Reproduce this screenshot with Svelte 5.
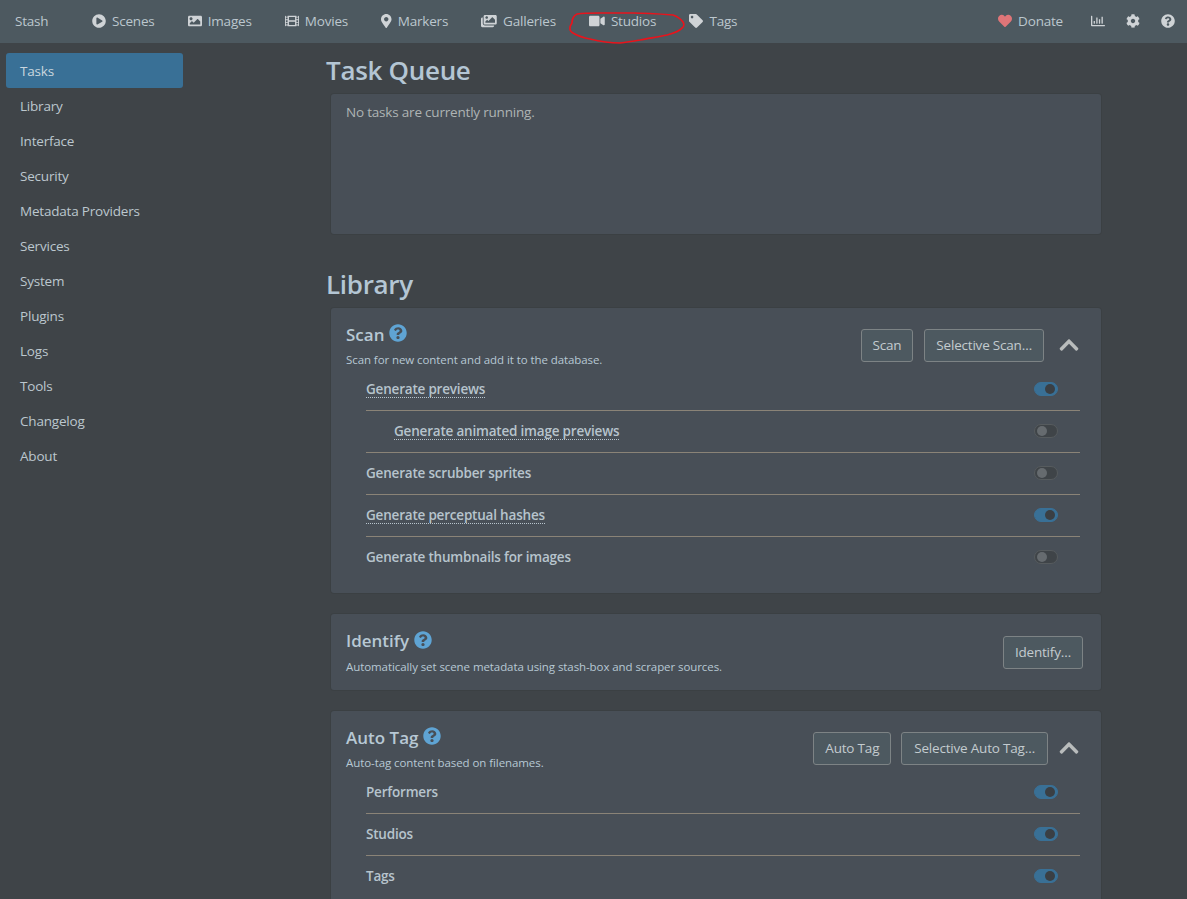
<script>
  const icons = {
    play: [512, "M256 8C119 8 8 119 8 256s111 248 248 248 248-111 248-248S393 8 256 8zm115.7 272l-176 101c-15.8 8.8-35.7-2.5-35.7-21V152c0-18.4 19.8-29.8 35.7-21l176 107c16.4 9.2 16.4 32.9 0 42z"],
    image: [512, "M464 448H48c-26.51 0-48-21.49-48-48V112c0-26.51 21.49-48 48-48h416c26.51 0 48 21.49 48 48v288c0 26.51-21.49 48-48 48zM112 120c-30.928 0-56 25.072-56 56s25.072 56 56 56 56-25.072 56-56-25.072-56-56-56zM64 384h384V272l-87.515-87.515c-4.686-4.686-12.284-4.686-16.971 0L208 320l-55.515-55.515c-4.686-4.686-12.284-4.686-16.971 0L64 336v48z"],
    film: [512, "M488 64h-8v20c0 6.6-5.4 12-12 12h-40c-6.6 0-12-5.4-12-12V64H96v20c0 6.6-5.4 12-12 12H44c-6.6 0-12-5.4-12-12V64h-8C10.7 64 0 74.7 0 88v336c0 13.3 10.7 24 24 24h8v-20c0-6.6 5.4-12 12-12h40c6.6 0 12 5.4 12 12v20h320v-20c0-6.6 5.4-12 12-12h40c6.6 0 12 5.4 12 12v20h8c13.3 0 24-10.7 24-24V88c0-13.3-10.7-24-24-24zM96 372c0 6.6-5.4 12-12 12H44c-6.6 0-12-5.4-12-12v-40c0-6.6 5.4-12 12-12h40c6.6 0 12 5.4 12 12v40zm0-96c0 6.6-5.4 12-12 12H44c-6.6 0-12-5.4-12-12v-40c0-6.6 5.4-12 12-12h40c6.6 0 12 5.4 12 12v40zm0-96c0 6.6-5.4 12-12 12H44c-6.6 0-12-5.4-12-12v-40c0-6.6 5.4-12 12-12h40c6.6 0 12 5.4 12 12v40zm272 208c0 6.6-5.4 12-12 12H156c-6.6 0-12-5.4-12-12v-96c0-6.6 5.4-12 12-12h200c6.6 0 12 5.4 12 12v96zm0-168c0 6.6-5.4 12-12 12H156c-6.6 0-12-5.4-12-12v-96c0-6.6 5.4-12 12-12h200c6.6 0 12 5.4 12 12v96zm112 152c0 6.6-5.4 12-12 12h-40c-6.6 0-12-5.4-12-12v-40c0-6.6 5.4-12 12-12h40c6.6 0 12 5.4 12 12v40zm0-96c0 6.6-5.4 12-12 12h-40c-6.6 0-12-5.4-12-12v-40c0-6.6 5.4-12 12-12h40c6.6 0 12 5.4 12 12v40zm0-96c0 6.6-5.4 12-12 12h-40c-6.6 0-12-5.4-12-12v-40c0-6.6 5.4-12 12-12h40c6.6 0 12 5.4 12 12v40z"],
    marker: [384, "M172.268 501.67C26.97 291.031 0 256.406 0 192 0 85.961 85.961 0 192 0s192 85.961 192 192c0 64.406-26.97 99.031-172.268 309.67-9.535 13.774-29.93 13.773-39.464 0zM192 272c44.183 0 80-35.817 80-80s-35.817-80-80-80-80 35.817-80 80 35.817 80 80 80z"],
    images: [576, "M480 416v16c0 26.51-21.49 48-48 48H48c-26.51 0-48-21.49-48-48V176c0-26.51 21.49-48 48-48h16v208c0 44.112 35.888 80 80 80h336zm96-80V80c0-26.51-21.49-48-48-48H144c-26.51 0-48 21.49-48 48v256c0 26.51 21.49 48 48 48h384c26.51 0 48-21.49 48-48zM256 128c0 26.51-21.49 48-48 48s-48-21.49-48-48 21.49-48 48-48 48 21.49 48 48zm-96 144l55.515-55.515c4.686-4.686 12.284-4.686 16.971 0L272 256l135.515-135.515c4.686-4.686 12.284-4.686 16.971 0L512 208v112H160v-48z"],
    video: [576, "M336.2 64H47.8C21.4 64 0 85.4 0 111.8v288.4C0 426.6 21.4 448 47.8 448h288.4c26.4 0 47.8-21.4 47.8-47.8V111.8c0-26.4-21.4-47.8-47.8-47.8zm189.4 37.7L416 177.3v157.4l109.6 75.5c21.2 14.6 50.4-.3 50.4-25.8V127.5c0-25.4-29.1-40.4-50.4-25.8z"],
    tag: [512, "M0 252.118V48C0 21.49 21.49 0 48 0h204.118a48 48 0 0 1 33.941 14.059l211.882 211.882c18.745 18.745 18.745 49.137 0 67.882L293.823 497.941c-18.745 18.745-49.137 18.745-67.882 0L14.059 286.059A48 48 0 0 1 0 252.118zM112 64c-26.51 0-48 21.49-48 48s21.49 48 48 48 48-21.49 48-48-21.49-48-48-48z"],
    heart: [512, "M462.3 62.6C407.5 15.9 326 24.3 275.7 76.2L256 96.5l-19.7-20.3C186.1 24.3 104.5 15.9 49.7 62.6c-62.8 53.6-66.1 149.8-9.9 207.9l193.5 199.8c12.5 12.9 32.8 12.9 45.3 0l193.5-199.8c56.3-58.1 53-154.3-9.8-207.9z"],
    chart: [512, "M396.8 352h22.4c6.4 0 12.8-6.4 12.8-12.8V108.8c0-6.4-6.4-12.8-12.8-12.8h-22.4c-6.4 0-12.8 6.4-12.8 12.8v230.4c0 6.4 6.4 12.8 12.8 12.8zm-192 0h22.4c6.4 0 12.8-6.4 12.8-12.8V140.8c0-6.4-6.4-12.8-12.8-12.8h-22.4c-6.4 0-12.8 6.4-12.8 12.8v198.4c0 6.4 6.4 12.8 12.8 12.8zm96 0h22.4c6.4 0 12.8-6.4 12.8-12.8V204.8c0-6.4-6.4-12.8-12.8-12.8h-22.4c-6.4 0-12.8 6.4-12.8 12.8v134.4c0 6.4 6.4 12.8 12.8 12.8zM496 400H48V80c0-8.84-7.16-16-16-16H16C7.16 64 0 71.16 0 80v336c0 17.67 14.33 32 32 32h464c8.84 0 16-7.16 16-16v-16c0-8.84-7.16-16-16-16zm-387.2-48h22.4c6.4 0 12.8-6.4 12.8-12.8v-70.4c0-6.4-6.4-12.8-12.8-12.8h-22.4c-6.4 0-12.8 6.4-12.8 12.8v70.4c0 6.4 6.4 12.8 12.8 12.8z"],
    cog: [512, "M487.4 315.7l-42.6-24.6c4.3-23.2 4.3-47 0-70.2l42.6-24.6c4.9-2.8 7.1-8.6 5.5-14-11.1-35.6-30-67.8-54.7-94.6-3.8-4.1-10-5.1-14.8-2.3L380.8 110c-17.9-15.4-38.5-27.3-60.8-35.1V25.8c0-5.6-3.9-10.5-9.4-11.7-36.7-8.2-74.3-7.8-109.2 0-5.5 1.2-9.4 6.1-9.4 11.7V75c-22.2 7.9-42.8 19.8-60.8 35.1L88.7 85.5c-4.9-2.8-11-1.9-14.8 2.3-24.7 26.7-43.6 58.9-54.7 94.6-1.7 5.4.6 11.2 5.5 14L67.3 221c-4.3 23.2-4.3 47 0 70.2l-42.6 24.6c-4.9 2.8-7.1 8.6-5.5 14 11.1 35.6 30 67.8 54.7 94.6 3.8 4.1 10 5.1 14.8 2.3l42.6-24.6c17.9 15.4 38.5 27.3 60.8 35.1v49.2c0 5.6 3.9 10.5 9.4 11.7 36.7 8.2 74.3 7.8 109.2 0 5.5-1.2 9.4-6.1 9.4-11.7v-49.2c22.2-7.9 42.8-19.8 60.8-35.1l42.6 24.6c4.9 2.8 11 1.9 14.8-2.3 24.7-26.7 43.6-58.9 54.7-94.6 1.5-5.5-.7-11.3-5.6-14.1zM256 336c-44.1 0-80-35.9-80-80s35.9-80 80-80 80 35.9 80 80-35.9 80-80 80z"],
    help: [512, "M504 256c0 136.997-111.043 248-248 248S8 392.997 8 256C8 119.083 119.043 8 256 8s248 111.083 248 248zM262.655 90c-54.497 0-89.255 22.957-116.549 63.758-3.536 5.286-2.353 12.415 2.715 16.258l34.699 26.31c5.205 3.947 12.621 3.008 16.665-2.122 17.864-22.658 30.113-35.797 57.303-35.797 20.429 0 45.698 13.148 45.698 32.958 0 14.976-12.363 22.667-32.534 33.976C247.128 238.528 216 254.941 216 296v4c0 6.627 5.373 12 12 12h56c6.627 0 12-5.373 12-12v-1.333c0-28.462 83.186-29.647 83.186-106.667 0-58.002-60.165-102-116.531-102zM256 338c-25.365 0-46 20.635-46 46 0 25.364 20.635 46 46 46s46-20.636 46-46c0-25.365-20.635-46-46-46z"],
    up: [448, "M240.971 130.524l194.343 194.343c9.373 9.373 9.373 24.569 0 33.941l-22.667 22.667c-9.357 9.357-24.522 9.375-33.901.04L224 227.495 69.255 381.516c-9.379 9.335-24.544 9.317-33.901-.04l-22.667-22.667c-9.373-9.373-9.373-24.569 0-33.941L207.03 130.525c9.372-9.373 24.568-9.373 33.941-.001z"]
  };
  const navItems = [
    ["play", "Scenes"], ["image", "Images"], ["film", "Movies"], ["marker", "Markers"],
    ["images", "Galleries"], ["video", "Studios"], ["tag", "Tags"]
  ];
  const sideItems = ["Tasks", "Library", "Interface", "Security", "Metadata Providers", "Services", "System", "Plugins", "Logs", "Tools", "Changelog", "About"];
  const scanRows = [
    { label: "Generate previews", on: true, hint: true },
    { label: "Generate animated image previews", on: false, hint: true, nested: true },
    { label: "Generate scrubber sprites", on: false },
    { label: "Generate perceptual hashes", on: true, hint: true },
    { label: "Generate thumbnails for images", on: false }
  ];
  const tagRows = [
    { label: "Performers", on: true }, { label: "Studios", on: true }, { label: "Tags", on: true }
  ];
</script>

{#snippet icon(name, cls = "")}
  <svg class="icon {cls}" viewBox="0 0 {icons[name][0]} 512" aria-hidden="true"><path fill="currentColor" d={icons[name][1]} /></svg>
{/snippet}

{#snippet settingRows(rows)}
  <div class="rows">
    {#each rows as row}
      <div class="row" class:nested={row.nested}>
        <span class="row-label" class:hint={row.hint}>{row.label}</span>
        <span class="toggle" class:on={row.on}><span class="knob"></span></span>
      </div>
    {/each}
  </div>
{/snippet}

<div class="page">
  <nav class="navbar">
    <a class="brand">Stash</a>
    <div class="nav-items">
      {#each navItems as [ic, label]}
        <a class="nav-link">{@render icon(ic)}<span>{label}</span></a>
      {/each}
    </div>
    <div class="nav-right">
      <a class="nav-link donate">{@render icon("heart", "heart")}<span>Donate</span></a>
      <a class="nav-icon">{@render icon("chart")}</a>
      <a class="nav-icon">{@render icon("cog")}</a>
      <a class="nav-icon">{@render icon("help")}</a>
    </div>
  </nav>

  <div class="layout">
    <aside class="sidebar">
      {#each sideItems as item, i}
        <a class="side-link" class:active={i === 0}>{item}</a>
      {/each}
    </aside>

    <main class="content">
      <h1 class="section-title">Task Queue</h1>
      <section class="card queue">No tasks are currently running.</section>

      <h1 class="section-title library">Library</h1>

      <section class="card setting-card">
        <div class="card-head">
          <div class="head-text">
            <h3>Scan {@render icon("help", "q")}</h3>
            <p>Scan for new content and add it to the database.</p>
          </div>
          <div class="actions">
            <button>Scan</button>
            <button>Selective Scan…</button>
            <span class="chev">{@render icon("up")}</span>
          </div>
        </div>
        {@render settingRows(scanRows)}
      </section>

      <section class="card setting-card identify">
        <div class="card-head">
          <div class="head-text">
            <h3>Identify {@render icon("help", "q")}</h3>
            <p>Automatically set scene metadata using stash-box and scraper sources.</p>
          </div>
          <div class="actions">
            <button>Identify…</button>
          </div>
        </div>
      </section>

      <section class="card setting-card">
        <div class="card-head">
          <div class="head-text">
            <h3>Auto Tag {@render icon("help", "q")}</h3>
            <p>Auto-tag content based on filenames.</p>
          </div>
          <div class="actions tag-actions">
            <button>Auto Tag</button>
            <button class="wide">Selective Auto Tag…</button>
            <span class="chev">{@render icon("up")}</span>
          </div>
        </div>
        {@render settingRows(tagRows)}
      </section>
    </main>
  </div>

  <svg class="scribble" viewBox="0 0 140 50" aria-hidden="true">
    <path d="M17 14C13 16 12 19 12 23C9 27 9 31 13 33C18 36 24 38 30 39C42 42 52 43 60 43C68 42 74 41 80 40C90 38 99 37 107 35C114 33 120 31 122 28C125 26 124 24 123 22C120 18 116 16 113 15C100 14 86 13 73 13C60 13 50 13 40 13C32 13 24 13 17 14" />
  </svg>
</div>

<style>
  :global(body) {
    margin: 0;
    overflow: hidden;
    background: #3f4448;
  }
  .page {
    position: relative;
    height: 899px;
    overflow: hidden;
    background: #3f4448;
    font-family: "Open Sans", "Noto Sans", sans-serif;
    font-size: 13.5px;
    letter-spacing: -0.2px;
    color: #c0c8ce;
  }
  .navbar {
    display: flex;
    align-items: center;
    height: 43px;
    box-sizing: border-box;
    padding-bottom: 2px;
    background: #4d5960;
    color: #bcc7ce;
  }
  .brand {
    padding-left: 15px;
    width: 60px;
    flex: none;
    box-sizing: content-box;
  }
  .nav-items {
    display: flex;
    padding-left: 17px;
  }
  .nav-link {
    display: flex;
    align-items: center;
    gap: 6px;
    margin-right: 33.2px;
    white-space: nowrap;
  }
  .nav-link .icon {
    color: #cfd3d6;
    height: 14px;
    width: auto;
  }
  .nav-right {
    margin-left: auto;
    display: flex;
    align-items: center;
    padding-right: 12px;
  }
  .nav-link.donate {
    margin-right: 7px;
  }
  .nav-link .heart {
    color: #df7578;
  }
  .nav-icon {
    display: flex;
    margin-left: 21px;
    color: #cfd3d6;
  }
  .nav-icon .icon {
    width: 14px;
    height: 14px;
  }
  .layout {
    display: flex;
    align-items: flex-start;
  }
  .sidebar {
    flex: none;
    width: 177px;
    margin: 10px 148px 0 6px;
    display: flex;
    flex-direction: column;
  }
  .side-link {
    height: 35px;
    line-height: 37px;
    padding-left: 14px;
    border-radius: 3px;
    color: #bcc7ce;
  }
  .active {
    background: #397096;
    color: #c9d6de;
  }
  .content {
    width: 770px;
    flex: none;
  }
  .section-title {
    margin: 8px 0 3px -5px;
    height: 40px;
    line-height: 38px;
    font-size: 26px;
    font-weight: 600;
    letter-spacing: -0.3px;
    color: #b4c6d4;
  }
  .section-title.library {
    margin-top: 31px;
  }
  .card {
    background: #484f57;
    border-radius: 3px;
    box-shadow: 0 0 0 1px rgba(0, 0, 0, 0.06);
    box-sizing: border-box;
  }
  .queue {
    height: 140px;
    padding: 9px 15px;
    color: #aeb4b4;
    line-height: 18px;
  }
  .setting-card {
    padding: 15px 21px 14px 15px;
    margin-bottom: 21px;
  }
  .setting-card.identify {
    height: 76px;
    padding-right: 18px;
  }
  .card-head {
    display: flex;
    justify-content: space-between;
    align-items: center;
    height: 46px;
    box-sizing: border-box;
    padding-bottom: 2px;
  }
  .identify .card-head {
    padding-bottom: 0;
  }
  h3 {
    margin: 0 0 4px;
    display: flex;
    align-items: center;
    gap: 5px;
    font-size: 17px;
    line-height: 24px;
    font-weight: 600;
    letter-spacing: 0;
    color: #b7c8d4;
  }
  .identify h3 {
    margin-bottom: 5px;
  }
  h3 .q {
    width: 18px;
    height: 18px;
    color: #5fa4d4;
    margin-bottom: 3px;
  }
  .head-text p {
    margin: 0;
    font-size: 11.5px;
    line-height: 17px;
    letter-spacing: -0.08px;
    color: #b7c8d4;
  }
  .actions {
    display: flex;
    align-items: center;
    gap: 11px;
  }
  .tag-actions {
    gap: 10px;
  }
  button {
    height: 33px;
    padding: 0 11px;
    background: #4d5960;
    border: 1px solid #7d8385;
    border-radius: 3px;
    color: #c3cbcf;
    font: inherit;
    letter-spacing: inherit;
  }
  button.wide {
    padding: 0 12px;
  }
  .chev {
    display: flex;
    width: 22px;
    margin-left: 3px;
    color: #b9bcbc;
  }
  .tag-actions .chev {
    margin-left: 0;
  }
  .chev .icon {
    width: 22px;
    height: 22px;
  }
  .rows {
    margin-left: 20px;
  }
  .row {
    display: flex;
    align-items: center;
    justify-content: space-between;
    height: 42px;
    box-sizing: border-box;
    padding: 0 22px 2px 0;
    border-bottom: 1px solid #8a8377;
  }
  .row:last-child {
    border-bottom: 0;
  }
  .nested .row-label {
    margin-left: 28px;
  }
  .row-label {
    font-weight: 600;
    color: #b7c4cd;
  }
  .hint {
    border-bottom: 1px dotted #b7c4cd;
    line-height: 15px;
    margin-top: 2px;
  }
  .toggle {
    width: 24px;
    height: 14px;
    box-sizing: border-box;
    border-radius: 7px;
    background: #3f4448;
    border: 1px solid #565b5e;
    display: flex;
    align-items: center;
    padding: 0 2px;
  }
  .knob {
    width: 10px;
    height: 10px;
    border-radius: 50%;
    background: #666b6f;
  }
  .toggle.on {
    background: #397096;
    border-color: #397096;
    justify-content: flex-end;
  }
  .on .knob {
    background: #3a3f44;
  }
  .scribble {
    position: absolute;
    left: 560px;
    top: 0;
    width: 140px;
    height: 50px;
  }
  .scribble path {
    fill: none;
    stroke: #e8141c;
    stroke-width: 1.7;
    stroke-linejoin: round;
  }
</style>
